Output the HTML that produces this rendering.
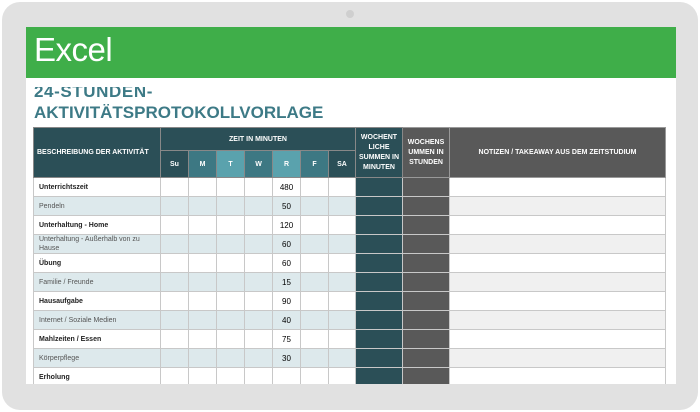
<!DOCTYPE html><html><head><style>
body{margin:0;width:700px;height:412px;background:#fff;position:relative;overflow:hidden;font-family:"Liberation Sans",sans-serif}
.frame{position:absolute;left:2px;top:2px;width:696px;height:408px;background:#e1e1e1;border-radius:18px}
.cam{position:absolute;left:346px;top:10px;width:8px;height:8px;border-radius:50%;background:#cfcfcf}
.screen{position:absolute;left:26px;top:27px;width:650px;height:357px;background:#fff;overflow:hidden}
.green{position:absolute;left:0;top:0;width:650px;height:51px;background:#3fae49}
.green span{position:absolute;left:8px;top:4px;color:#fff;font-size:33px;letter-spacing:-0.5px}
.t{position:absolute;left:8px;overflow:hidden;width:400px}
.t span{position:absolute;left:0;color:#3d7a86;font-weight:bold;font-size:17px;line-height:17px;letter-spacing:0.6px;white-space:nowrap}
table{position:absolute;left:7px;top:100px;border-collapse:collapse;table-layout:fixed}
td{border:1px solid #c8c8c8;padding:0;font-size:7px;height:18px;overflow:hidden;white-space:nowrap}
.h{background:#2b4f57;color:#fff;font-weight:bold;text-align:center;font-size:7px;border-color:#888}
.g{background:#595959;color:#fff;font-weight:bold;text-align:center;font-size:7px;border-color:#999}
.d1{background:#3d7883}.d2{background:#5aa2ad}
.desc{padding-left:5px;color:#222}
.b td.desc{font-weight:bold}
.a td{background:#dde9ec}.a td.desc{color:#555}
.a td.n{background:#f0f0f0}
td.wt{background:#2b4f57!important}td.wg{background:#595959!important}
td.v{text-align:center;font-size:8px}
</style></head><body>
<div class="frame"></div><div class="cam"></div>
<div class="screen">
<div class="green"><span>Excel</span></div>
<div class="t" style="top:60px;height:14px"><span style="top:-4px">24-STUNDEN-</span></div>
<div class="t" style="top:77px;height:15px"><span style="top:0px;letter-spacing:0">AKTIVITÄTSPROTOKOLLVORLAGE</span></div>
<table>
<colgroup><col style="width:127px"><col style="width:28px"><col style="width:28px"><col style="width:28px"><col style="width:28px"><col style="width:28px"><col style="width:28px"><col style="width:27px"><col style="width:47px"><col style="width:47px"><col style="width:216px"></colgroup>
<tr><td class="h" rowspan="2" style="height:49px;text-align:left;padding-left:3px">BESCHREIBUNG DER AKTIVITÄT</td><td class="h" colspan="7" style="height:22px">ZEIT IN MINUTEN</td><td class="h" rowspan="2" style="line-height:10px;white-space:normal">WOCHENT LICHE SUMMEN IN MINUTEN</td><td class="g" rowspan="2" style="line-height:10px;white-space:normal">WOCHENS UMMEN IN STUNDEN</td><td class="g" rowspan="2">NOTIZEN / TAKEAWAY AUS DEM ZEITSTUDIUM</td></tr>
<tr><td class="h" style="height:26px">Su</td><td class="h d1">M</td><td class="h d2">T</td><td class="h d1">W</td><td class="h d2">R</td><td class="h d1">F</td><td class="h">SA</td></tr>
<tr class="b"><td class="desc">Unterrichtszeit</td><td></td><td></td><td></td><td></td><td class="v">480</td><td></td><td></td><td class="wt"></td><td class="wg"></td><td class="n"></td></tr>
<tr class="a"><td class="desc">Pendeln</td><td></td><td></td><td></td><td></td><td class="v">50</td><td></td><td></td><td class="wt"></td><td class="wg"></td><td class="n"></td></tr>
<tr class="b"><td class="desc">Unterhaltung - Home</td><td></td><td></td><td></td><td></td><td class="v">120</td><td></td><td></td><td class="wt"></td><td class="wg"></td><td class="n"></td></tr>
<tr class="a"><td class="desc" style="white-space:normal;line-height:9px">Unterhaltung - Außerhalb von zu Hause</td><td></td><td></td><td></td><td></td><td class="v">60</td><td></td><td></td><td class="wt"></td><td class="wg"></td><td class="n"></td></tr>
<tr class="b"><td class="desc">Übung</td><td></td><td></td><td></td><td></td><td class="v">60</td><td></td><td></td><td class="wt"></td><td class="wg"></td><td class="n"></td></tr>
<tr class="a"><td class="desc">Familie / Freunde</td><td></td><td></td><td></td><td></td><td class="v">15</td><td></td><td></td><td class="wt"></td><td class="wg"></td><td class="n"></td></tr>
<tr class="b"><td class="desc">Hausaufgabe</td><td></td><td></td><td></td><td></td><td class="v">90</td><td></td><td></td><td class="wt"></td><td class="wg"></td><td class="n"></td></tr>
<tr class="a"><td class="desc">Internet / Soziale Medien</td><td></td><td></td><td></td><td></td><td class="v">40</td><td></td><td></td><td class="wt"></td><td class="wg"></td><td class="n"></td></tr>
<tr class="b"><td class="desc">Mahlzeiten / Essen</td><td></td><td></td><td></td><td></td><td class="v">75</td><td></td><td></td><td class="wt"></td><td class="wg"></td><td class="n"></td></tr>
<tr class="a"><td class="desc">Körperpflege</td><td></td><td></td><td></td><td></td><td class="v">30</td><td></td><td></td><td class="wt"></td><td class="wg"></td><td class="n"></td></tr>
<tr class="b"><td class="desc">Erholung</td><td></td><td></td><td></td><td></td><td class="v"></td><td></td><td></td><td class="wt"></td><td class="wg"></td><td class="n"></td></tr>
</table>
</div>
</body></html>
